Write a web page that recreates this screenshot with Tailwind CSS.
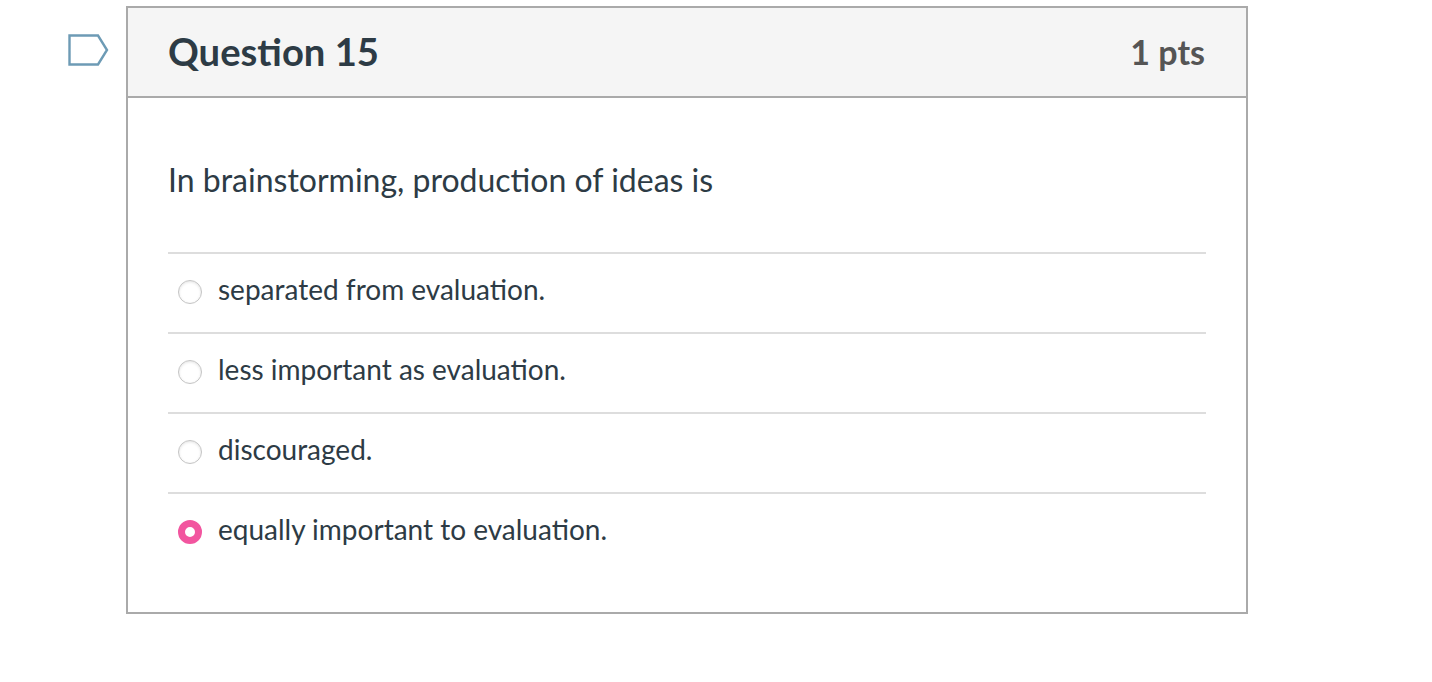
<!DOCTYPE html>
<html>
<head>
<meta charset="utf-8">
<script src="https://cdn.jsdelivr.net/npm/@tailwindcss/browser@4"></script>
</head>
<body class="bg-white font-['Lato','Open_Sans',sans-serif] text-[#2d3b45]">
<div class="w-[1432px] h-[682px] overflow-hidden pt-[6px] pl-[67px] flex items-start">
  <svg class="mt-[27px] w-[42px] h-[34px] shrink-0" viewBox="0 0 42 34" fill="none"><path d="M2.5 2.5H31L40 17L31 31.5H2.5Z" stroke="#6d9bb5" stroke-width="2.4"/></svg>
  <section class="ml-[17px] w-[1122px] h-[608px] border-2 border-[#aaaaaa] flex flex-col">
    <header class="h-[90px] shrink-0 bg-[#f5f5f5] border-b-2 border-[#aaaaaa] pl-[40px] pr-[41px] pb-[3px] flex items-center justify-between">
      <h2 class="mt-[2px] text-[38.2px] font-bold leading-none">Question 15</h2>
      <span class="mt-[2px] text-[34px] font-bold leading-none text-[#555555]">1 pts</span>
    </header>
    <div class="px-[40px]">
      <p class="mt-[62px] text-[32px] leading-[40px] h-[92px]">In brainstorming, production of ideas is</p>
      <ul class="text-[28px]">
        <li class="h-[80px] border-t-2 border-[#dddddd] flex items-center pl-[10px] gap-[16px] pb-[9px]">
          <span class="mt-[7px] w-[24px] h-[24px] rounded-full border border-[#c4c4c4] bg-white shadow-[inset_0_1px_3px_rgba(0,0,0,0.12)]"></span>separated from evaluation.
        </li>
        <li class="h-[80px] border-t-2 border-[#dddddd] flex items-center pl-[10px] gap-[16px] pb-[9px]">
          <span class="mt-[7px] w-[24px] h-[24px] rounded-full border border-[#c4c4c4] bg-white shadow-[inset_0_1px_3px_rgba(0,0,0,0.12)]"></span>less important as evaluation.
        </li>
        <li class="h-[80px] border-t-2 border-[#dddddd] flex items-center pl-[10px] gap-[16px] pb-[9px]">
          <span class="mt-[7px] w-[24px] h-[24px] rounded-full border border-[#c4c4c4] bg-white shadow-[inset_0_1px_3px_rgba(0,0,0,0.12)]"></span>discouraged.
        </li>
        <li class="h-[80px] border-t-2 border-[#dddddd] flex items-center pl-[10px] gap-[16px] pb-[9px]">
          <span class="mt-[7px] w-[24px] h-[24px] rounded-full border-[7px] border-[#f2559f] bg-white"></span>equally important to evaluation.
        </li>
      </ul>
    </div>
  </section>
</div>
</body>
</html>
